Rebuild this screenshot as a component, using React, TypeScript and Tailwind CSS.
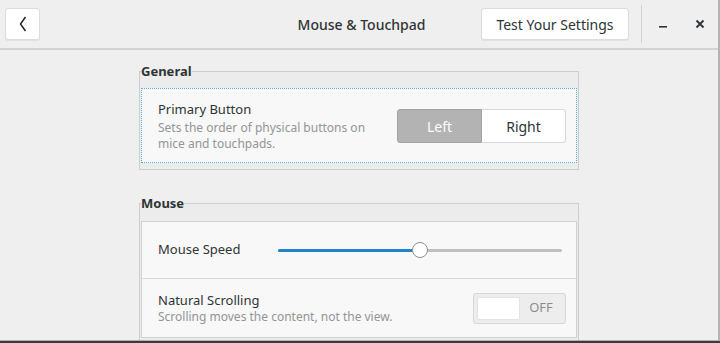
import { useState } from "react";

const font = { fontFamily: '"Noto Sans", "Open Sans", sans-serif' };

function HeaderBar() {
  return (
    <div className="grid h-[50px] shrink-0 grid-cols-[1fr_auto_1fr] items-center border-b-2 border-[#d3d3d3] bg-[#efefef] pl-[5px]">
      <div>
        <button className="flex h-[32px] w-[35px] items-center justify-center rounded-[3px] border border-[#dcdcdc] bg-white shadow-[0_1px_1px_rgba(0,0,0,0.06)]">
          <svg width="10" height="16" viewBox="0 0 10 16" fill="none">
            <path d="M7.5 1 L2.5 8 L7.5 15" stroke="#1e1e1e" strokeWidth="1.4" />
          </svg>
        </button>
      </div>
      <div className="text-center text-[14px] font-medium text-[#2e3436]">Mouse &amp; Touchpad</div>
      <div className="flex items-center justify-end">
        <button className="h-[32px] w-[148px] rounded-[3px] border border-[#dcdcdc] bg-white text-[14px] text-[#2e3436] shadow-[0_1px_1px_rgba(0,0,0,0.06)]">
          Test Your Settings
        </button>
        <div className="ml-[12px] h-[38px] w-px bg-[#d2d2d2]" />
        <div className="flex w-[76px] items-center justify-around pl-[2px]">
          <svg width="10" height="10" viewBox="0 0 10 10">
            <rect x="1" y="7" width="8" height="1.6" fill="#2e3436" />
          </svg>
          <svg width="10" height="10" viewBox="0 0 10 10">
            <path d="M1.5 1.5 L8.5 8.5 M8.5 1.5 L1.5 8.5" stroke="#2e3436" strokeWidth="1.9" />
          </svg>
        </div>
      </div>
    </div>
  );
}

function Frame({ label, children }: { label: string; children: React.ReactNode }) {
  return (
    <fieldset className="m-0 min-w-0 border border-[#cdcdcd] bg-[#ececec] px-px pt-[8px] pb-[6px]">
      <legend className="p-0 text-[13px] leading-[18px] font-bold text-[#2e3436]">{label}</legend>
      {children}
    </fieldset>
  );
}

export default function App() {
  const [primary, setPrimary] = useState("left");
  const speed = 0.5;

  return (
    <div className="h-[343px] w-[720px] overflow-hidden bg-[#3b3b3b]" style={font}>
      <div className="flex h-[341px] w-[720px] flex-col overflow-hidden border-r-2 border-b border-[#b4b4b4] bg-[#efefef]">
        <HeaderBar />
        <div className="mx-auto w-[440px] pt-[12px]">
          <Frame label="General">
            <div className="flex items-center border border-dotted border-[#5aa9da] bg-[#f8f8f8] pt-[11px] pr-[10px] pb-[10px] pl-[16px]">
              <div className="flex-1">
                <div className="text-[13px] leading-[18px] text-[#2e3436]">Primary Button</div>
                <div className="mt-[2px] max-w-[215px] text-[12px] leading-[16px] text-[#929595]">
                  Sets the order of physical buttons on mice and touchpads.
                </div>
              </div>
              <div className="flex h-[34px] text-[14px]">
                <button
                  onClick={() => setPrimary("left")}
                  className={
                    primary === "left"
                      ? "w-[85px] rounded-l-[3px] border border-[#a3a3a3] bg-[#b3b3b3] text-white"
                      : "w-[85px] rounded-l-[3px] border border-[#d8d8d8] bg-white text-[#2e3436]"
                  }
                >
                  Left
                </button>
                <button
                  onClick={() => setPrimary("right")}
                  className={
                    primary === "right"
                      ? "w-[84px] rounded-r-[3px] border border-l-0 border-[#a3a3a3] bg-[#b3b3b3] text-white"
                      : "w-[84px] rounded-r-[3px] border border-l-0 border-[#d8d8d8] bg-white text-[#2e3436]"
                  }
                >
                  Right
                </button>
              </div>
            </div>
          </Frame>

          <div className="mt-[24px]">
            <Frame label="Mouse">
              <div className="mt-px border border-[#d0d0d0] bg-[#f8f8f8]">
                <div className="flex h-[57px] items-center border-b border-[#dadada] pr-[14px] pl-[16px]">
                  <div className="w-[120px] text-[13px] text-[#2e3436]">Mouse Speed</div>
                  <div className="relative flex h-[16px] flex-1 items-center">
                    <div className="h-[3px] w-full rounded-full bg-[#bfbfbf]" />
                    <div
                      className="absolute left-0 h-[3px] rounded-full bg-[#2083cb]"
                      style={{ width: `${speed * 100}%` }}
                    />
                    <div
                      className="absolute h-[16px] w-[16px] -translate-x-1/2 rounded-full border border-[#8f8f8f] bg-white"
                      style={{ left: `${speed * 100}%` }}
                    />
                  </div>
                </div>
                <div className="flex h-[58px] items-center pr-[10px] pl-[16px]">
                  <div className="flex-1">
                    <div className="text-[13px] leading-[18px] text-[#2e3436]">Natural Scrolling</div>
                    <div className="text-[12px] leading-[16px] text-[#929595]">
                      Scrolling moves the content, not the view.
                    </div>
                  </div>
                  <div className="flex h-[31px] w-[93px] items-center rounded-[3px] border border-[#d6d6d6] bg-[#ededed] px-[3px]">
                    <div className="h-[23px] w-[43px] rounded-[2px] border border-[#e3e3e3] bg-white" />
                    <span className="flex-1 text-center text-[13px] text-[#8a8e8f]">OFF</span>
                  </div>
                </div>
              </div>
            </Frame>
          </div>
        </div>
      </div>
    </div>
  );
}
